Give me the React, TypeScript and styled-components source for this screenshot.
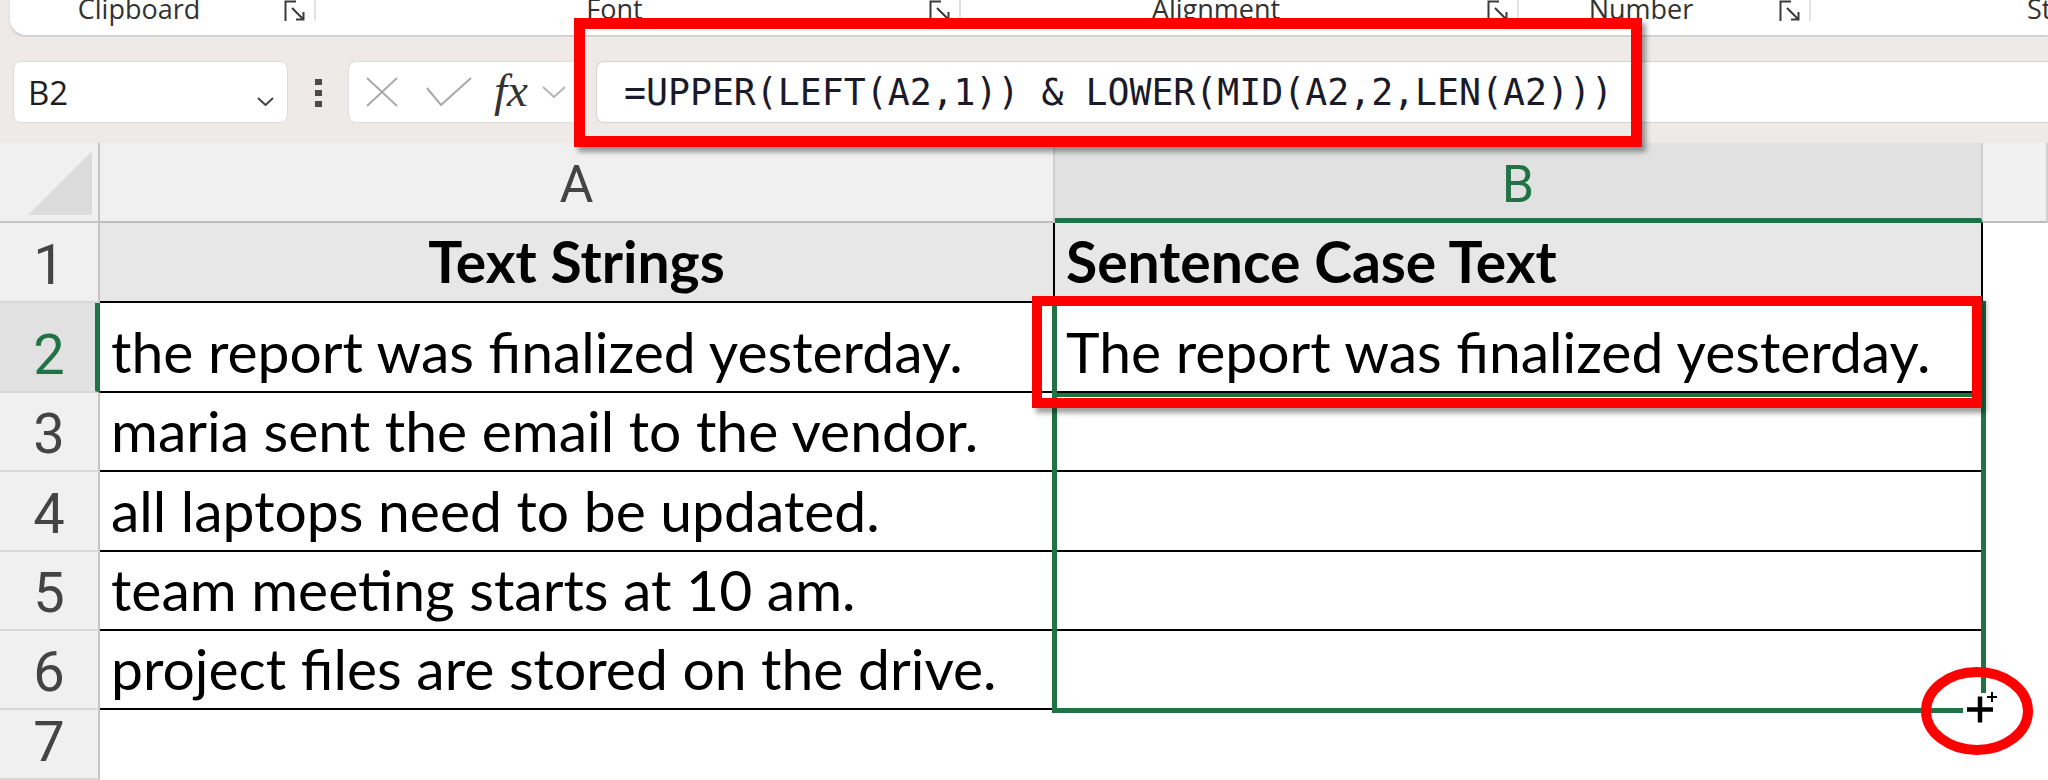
import React from "react";
import styled, { createGlobalStyle } from "styled-components";

const GlobalStyle = createGlobalStyle`
  html, body {
    margin: 0;
    padding: 0;
    background: #ffffff;
    overflow: hidden;
  }
  * {
    box-sizing: border-box;
  }
`;

const GREEN = "#217346";
const BAND = "#eeeae8";
const CELL_FONT = `"Lato", "Open Sans", sans-serif`;
const HEAD_FONT = `"Liberation Sans Narrow", "Roboto", "Liberation Sans", sans-serif`;

const Page = styled.div`
  position: relative;
  width: 2048px;
  height: 780px;
  overflow: hidden;
  display: flex;
  flex-direction: column;
  background: #ffffff;
  font-family: "Open Sans", sans-serif;
`;

/* ---------- ribbon ---------- */

const Ribbon = styled.div`
  flex: none;
  height: 37px;
  background: ${BAND};
`;

const RibbonPanel = styled.div`
  margin-left: 10px;
  height: 35px;
  display: flex;
  background: #ffffff;
  border-bottom-left-radius: 16px;
  box-shadow: 0 2px 3px rgba(0, 0, 0, 0.14);
  overflow: hidden;
`;

const Group = styled.div<{ $w?: number }>`
  flex: ${(p) => (p.$w ? "none" : "1")};
  width: ${(p) => (p.$w ? `${p.$w}px` : "auto")};
  display: flex;
  align-items: flex-start;
`;

const GroupLabel = styled.span<{ $left?: number }>`
  flex: 1;
  margin-top: -5px;
  padding-right: ${(p) => (p.$left ? 0 : 16)}px;
  padding-left: ${(p) => p.$left ?? 0}px;
  text-align: ${(p) => (p.$left ? "left" : "center")};
  font-size: 27px;
  line-height: 27px;
  color: #323232;
  white-space: nowrap;
`;

const Launcher = styled.svg`
  flex: none;
  margin-right: 8px;
`;

const GroupDivider = styled.div`
  flex: none;
  width: 2px;
  height: 21px;
  background: #e2e2e2;
`;

/* ---------- formula bar ---------- */

const FormulaBand = styled.div`
  flex: none;
  height: 106px;
  padding-top: 24px;
  display: flex;
  align-items: flex-start;
  background: ${BAND};
`;

const NameBox = styled.div`
  flex: none;
  margin-left: 13px;
  width: 275px;
  height: 62px;
  display: flex;
  align-items: center;
  justify-content: space-between;
  padding: 0 13px 0 14px;
  background: #ffffff;
  border: 1px solid #e0dcdb;
  border-radius: 8px;
  font-size: 33px;
  color: #1f1f1f;
`;

const NameChevron = styled.svg`
  margin-top: 18px;
`;

const DotColumn = styled.div`
  flex: none;
  margin: 18px 26px 0 27px;
  display: flex;
  flex-direction: column;
  gap: 5px;
`;

const Dot = styled.span`
  width: 7px;
  height: 6px;
  background: #4a4a4a;
`;

const FxBox = styled.div`
  flex: none;
  width: 236px;
  height: 62px;
  display: flex;
  align-items: center;
  padding-left: 17px;
  background: #ffffff;
  border: 1px solid #e0dcdb;
  border-radius: 8px;
`;

const FxIcon = styled.svg<{ $gap: number }>`
  flex: none;
  margin-right: ${(p) => p.$gap}px;
`;

const FxLabel = styled.span`
  margin-right: 14px;
  margin-top: -4px;
  font-family: "Liberation Serif", "DejaVu Serif", serif;
  font-style: italic;
  font-size: 47px;
  color: #333333;
`;

const FormulaInput = styled.div`
  flex: 1;
  margin-left: 12px;
  height: 62px;
  display: flex;
  align-items: center;
  padding-left: 27px;
  background: #ffffff;
  border: 1px solid #d6d2d1;
  border-right: none;
  border-radius: 8px 0 0 8px;
  font-family: "DejaVu Sans Mono", "Liberation Mono", monospace;
  font-size: 36.5px;
  color: #1a1a2a;
  white-space: pre;
`;

/* ---------- sheet grid ---------- */

const Sheet = styled.div`
  flex: 1;
  display: grid;
  grid-template-columns: 100px 955px 928px 1fr;
  grid-template-rows: 80px 80px 90px 79px 80px 79px 79px 1fr;
`;

const Corner = styled.div`
  display: flex;
  align-items: flex-end;
  justify-content: flex-end;
  padding: 0 6px 6px 0;
  background: #f0f0f0;
  border-right: 2px solid #c4c4c4;
  border-bottom: 2px solid #c4c4c4;
`;

const ColHeader = styled.div<{ $active?: boolean }>`
  display: flex;
  align-items: flex-end;
  justify-content: center;
  padding-bottom: ${(p) => (p.$active ? 7 : 10)}px;
  background: ${(p) => (p.$active ? "#e1e1e1" : "#f0f0f0")};
  border-right: 2px solid #cfcfcf;
  border-bottom: ${(p) => (p.$active ? `5px solid ${GREEN}` : "2px solid #bdbdbd")};
  font-family: ${HEAD_FONT};
  font-size: 52px;
  line-height: 1;
  color: ${(p) => (p.$active ? GREEN : "#444444")};
`;

const RowHeader = styled.div<{ $active?: boolean }>`
  display: flex;
  align-items: flex-end;
  justify-content: center;
  padding-bottom: 8px;
  padding-left: ${(p) => (p.$active ? 3 : 0)}px;
  background: ${(p) => (p.$active ? "#e1e1e1" : "#f0f0f0")};
  border-right: ${(p) => (p.$active ? `5px solid ${GREEN}` : "2px solid #c4c4c4")};
  border-bottom: 2px solid #d8d8d8;
  font-family: ${HEAD_FONT};
  font-size: 56px;
  line-height: 1;
  color: ${(p) => (p.$active ? GREEN : "#444444")};
`;

const Cell = styled.div<{ $head?: boolean; $center?: boolean; $ruled?: boolean }>`
  display: flex;
  align-items: flex-end;
  justify-content: ${(p) => (p.$center ? "center" : "flex-start")};
  padding: 0 0 11px ${(p) => (p.$center ? 0 : 11)}px;
  background: ${(p) => (p.$head ? "#e7e7e7" : "#ffffff")};
  border-right: ${(p) => (p.$ruled ? "2px solid #000000" : "none")};
  border-bottom: ${(p) => (p.$ruled ? "2px solid #000000" : "none")};
  font-family: ${CELL_FONT};
  font-size: 57px;
  font-weight: ${(p) => (p.$head ? 700 : 400)};
  line-height: 1;
  color: #000000;
  white-space: nowrap;
`;

/* ---------- overlays ---------- */

const Selection = styled.div`
  position: absolute;
  left: 1052px;
  top: 301px;
  width: 934px;
  height: 412px;
  border: 5px solid ${GREEN};
  pointer-events: none;
`;

const ActiveCell = styled.div`
  height: 91px;
  border-bottom: 4px solid ${GREEN};
`;

const Callout = styled.div<{ $x: number; $y: number; $w: number; $h: number; $t: number }>`
  position: absolute;
  left: ${(p) => p.$x}px;
  top: ${(p) => p.$y}px;
  width: ${(p) => p.$w}px;
  height: ${(p) => p.$h}px;
  border: ${(p) => p.$t}px solid #fe0000;
  box-shadow: 4px 5px 5px rgba(0, 0, 0, 0.38);
  pointer-events: none;
`;

const Overlay = styled.svg<{ $x: number; $y: number }>`
  position: absolute;
  left: ${(p) => p.$x}px;
  top: ${(p) => p.$y}px;
  overflow: visible;
`;

const LauncherIcon = () => (
  <Launcher width="22" height="22" viewBox="0 0 22 22">
    <path d="M1.5 21V1.5H12" fill="none" stroke="#3a3a3a" strokeWidth="2" />
    <path d="M8 8L19.5 19.5M19.5 12V19.5H12" fill="none" stroke="#3a3a3a" strokeWidth="2" />
  </Launcher>
);

const rows = [
  "the report was finalized yesterday.",
  "maria sent the email to the vendor.",
  "all laptops need to be updated.",
  "team meeting starts at 10 am.",
  "project files are stored on the drive.",
];

const ribbonGroups = [
  { label: "Clipboard", w: 304 },
  { label: "Font", w: 643 },
  { label: "Alignment", w: 556 },
  { label: "Number", w: 290 },
];

export default function App() {
  return (
    <Page>
      <GlobalStyle />
      <Ribbon>
        <RibbonPanel>
          {ribbonGroups.map((g) => (
            <React.Fragment key={g.label}>
              <Group $w={g.w}>
                <GroupLabel>{g.label}</GroupLabel>
                <LauncherIcon />
              </Group>
              <GroupDivider />
            </React.Fragment>
          ))}
          <Group>
            <GroupLabel $left={216}>Styles</GroupLabel>
          </Group>
        </RibbonPanel>
      </Ribbon>

      <FormulaBand>
        <NameBox>
          <span>B2</span>
          <NameChevron width="17" height="9" viewBox="0 0 17 9">
            <path d="M1 1L8.5 8L16 1" fill="none" stroke="#444" strokeWidth="2" />
          </NameChevron>
        </NameBox>
        <DotColumn>
          <Dot />
          <Dot />
          <Dot />
        </DotColumn>
        <FxBox>
          <FxIcon $gap={28} width="32" height="30" viewBox="0 0 32 30">
            <path d="M1 1L31 29M31 1L1 29" stroke="#aaaaaa" strokeWidth="2" />
          </FxIcon>
          <FxIcon $gap={22} width="46" height="30" viewBox="0 0 46 30">
            <path d="M1 11L15 28L45 1" fill="none" stroke="#aaaaaa" strokeWidth="2" />
          </FxIcon>
          <FxLabel>fx</FxLabel>
          <FxIcon $gap={0} width="24" height="12" viewBox="0 0 24 12">
            <path d="M1 1L12 11L23 1" fill="none" stroke="#b4b4b4" strokeWidth="2" />
          </FxIcon>
        </FxBox>
        <FormulaInput>=UPPER(LEFT(A2,1)) &amp; LOWER(MID(A2,2,LEN(A2)))</FormulaInput>
      </FormulaBand>

      <Sheet>
        <Corner>
          <svg width="64" height="64" viewBox="0 0 64 64">
            <polygon points="64,0 64,64 0,64" fill="#dcdcdc" />
          </svg>
        </Corner>
        <ColHeader>A</ColHeader>
        <ColHeader $active>B</ColHeader>
        <ColHeader />

        <RowHeader>1</RowHeader>
        <Cell $head $center $ruled>Text Strings</Cell>
        <Cell $head $ruled>Sentence Case Text</Cell>
        <Cell />

        {rows.map((text, i) => (
          <React.Fragment key={text}>
            <RowHeader $active={i === 0}>{i + 2}</RowHeader>
            <Cell $ruled>{text}</Cell>
            <Cell $ruled>
              {i === 0 ? "The report was finalized yesterday." : ""}
            </Cell>
            <Cell />
          </React.Fragment>
        ))}

        <RowHeader>7</RowHeader>
        <Cell />
        <Cell />
        <Cell />
      </Sheet>

      <Selection>
        <ActiveCell />
      </Selection>

      <Callout $x={574} $y={18} $w={1068} $h={129} $t={11} />
      <Callout $x={1032} $y={296} $w={950} $h={112} $t={10} />

      <Overlay $x={1960} $y={688} width="45" height="40" viewBox="0 0 45 40">
        <rect x="3" y="5" width="28" height="22" fill="#ffffff" />
        <path d="M7 21.5H33M20 8.5V34.5" stroke="#ffffff" strokeWidth="8" />
        <path d="M7 21.5H33M20 8.5V34.5" stroke="#000000" strokeWidth="4.5" />
        <path d="M27 9H37M32 4V14" stroke="#ffffff" strokeWidth="4" />
        <path d="M27 9H37M32 4V14" stroke="#000000" strokeWidth="2" />
      </Overlay>

      <Overlay $x={1920} $y={666} width="116" height="92" viewBox="0 0 116 92">
        <ellipse cx="57" cy="45" rx="51" ry="39" fill="none" stroke="#fe0000" strokeWidth="10" />
      </Overlay>
    </Page>
  );
}
